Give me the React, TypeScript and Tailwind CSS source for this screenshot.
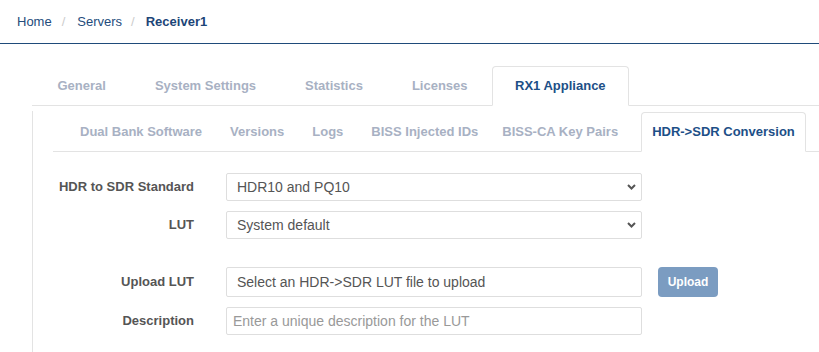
import React from "react";

const topTabs = ["General", "System Settings", "Statistics", "Licenses", "RX1 Appliance"];
const subTabs = [
  "Dual Bank Software",
  "Versions",
  "Logs",
  "BISS Injected IDs",
  "BISS-CA Key Pairs",
  "HDR->SDR Conversion",
];

function Chevron() {
  return (
    <svg
      className="pointer-events-none absolute right-[6px] top-1/2 -translate-y-1/2"
      width="9"
      height="6"
      viewBox="0 0 9 6"
    >
      <path d="M1 1l3.5 3.5L8 1" fill="none" stroke="#555" strokeWidth="2" />
    </svg>
  );
}

function SelectField({ value }: { value: string }) {
  return (
    <div className="relative w-[416px]">
      <select
        defaultValue={value}
        className="h-[28px] w-full appearance-none rounded-[2px] border border-[#dedede] bg-white pl-[10px] text-[14px] text-[#555] outline-none"
      >
        <option>{value}</option>
      </select>
      <Chevron />
    </div>
  );
}

function Label({ children }: { children: React.ReactNode }) {
  return (
    <label className="w-[161px] shrink-0 text-right text-[13px] font-bold text-[#555]">
      {children}
    </label>
  );
}

export default function App() {
  return (
    <div className="min-h-screen bg-white font-['Liberation_Sans',Arial,sans-serif]">
      {/* Breadcrumb */}
      <nav className="flex h-[44px] items-center border-b border-[#1f4b7a] pl-[17px] text-[13px]">
        <span className="text-[#244c7c]">Home</span>
        <span className="pl-[10px] pr-[12px] text-[#ccc]">/</span>
        <span className="text-[#244c7c]">Servers</span>
        <span className="pl-[9px] pr-[11px] text-[#ccc]">/</span>
        <span className="font-bold text-[#1c4577]">Receiver1</span>
      </nav>

      <div className="ml-[32px] mt-[22px]">
        {/* Top tabs */}
        <ul className="flex border-b border-[#e3e3e3] pl-[1px]">
          {topTabs.map((t) => {
            const active = t === "RX1 Appliance";
            return (
              <li
                key={t}
                className={`-mb-px rounded-t-[4px] border py-[10px] text-[13px] font-bold leading-[18px] ${
                  active
                    ? "border-[#e3e3e3] border-b-white bg-white px-[22px] text-[#1d4f87]"
                    : "border-transparent px-[23.5px] text-[#a8b1c3]"
                }`}
              >
                {t}
              </li>
            );
          })}
        </ul>

        {/* Tab content */}
        <div className="mt-[5px] border-l border-[#e3e3e3] pb-[17px] pt-[1px]">
          <ul className="ml-[20px] flex border-b border-[#e3e3e3] pl-[13px]">
            {subTabs.map((t) => {
              const active = t === "HDR->SDR Conversion";
              const extra =
                t === "BISS-CA Key Pairs" ? "-ml-[4px]" : "";
              return (
                <li
                  key={t}
                  className={`-mb-px rounded-t-[4px] border py-[10px] text-[13px] font-bold leading-[18px] ${extra} ${
                    active
                      ? "ml-[9px] border-[#e3e3e3] border-b-white bg-white px-[10px] text-[#1d4f87]"
                      : "border-transparent px-[13px] text-[#a8b1c3]"
                  }`}
                >
                  {t}
                </li>
              );
            })}
          </ul>

          <form className="pt-[21px]">
            <div className="flex items-center gap-[32px]">
              <Label>HDR to SDR Standard</Label>
              <SelectField value="HDR10 and PQ10" />
            </div>
            <div className="mt-[10px] flex items-center gap-[32px]">
              <Label>LUT</Label>
              <SelectField value="System default" />
            </div>

            <div className="mt-[28px] flex items-center gap-[32px]">
              <Label>Upload LUT</Label>
              <div className="flex h-[30px] w-[416px] items-center rounded-[2px] border border-[#dedede] pl-[10px] text-[14px] text-[#555]">
                Select an HDR-&gt;SDR LUT file to upload
              </div>
              <button
                type="button"
                className="-ml-[16px] h-[30px] w-[60px] rounded-[4px] bg-[#7b9cc1] text-[12px] font-bold text-white"
              >
                Upload
              </button>
            </div>
            <div className="mt-[10px] flex items-center gap-[32px]">
              <Label>Description</Label>
              <input
                placeholder="Enter a unique description for the LUT"
                className="h-[28px] w-[416px] rounded-[2px] border border-[#dedede] px-[6px] text-[14px] text-[#555] outline-none placeholder:text-[#999]"
              />
            </div>
          </form>
        </div>
      </div>
    </div>
  );
}
